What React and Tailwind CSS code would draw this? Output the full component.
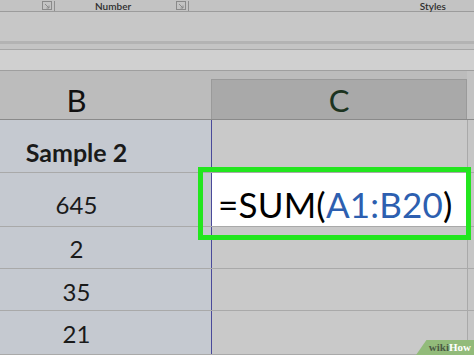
import React from "react";

const rows = [
  { b: "Sample 2", bold: true, h: "h-[53px]", pt: "pt-[20px]" },
  { b: "645", formula: true, h: "h-[54px]", pt: "pt-[20px]" },
  { b: "2", h: "h-[42px]", pt: "pt-[10px]" },
  { b: "35", h: "h-[42px]", pt: "pt-[11px]" },
  { b: "21", h: "h-[44px]", pt: "pt-[11px]" },
];

function Launcher() {
  return (
    <span className="flex items-center gap-[2px]">
      <svg width="10" height="9" viewBox="0 0 10 9" className="block">
        <rect x="0.5" y="0.5" width="9" height="8" fill="none" stroke="#8a8a8a" />
        <path d="M3 3 L7 7 M7 4.5 L7 7 L4.5 7" fill="none" stroke="#8a8a8a" />
      </svg>
      <span className="block w-px h-[10px] bg-[#8f8f8f]" />
    </span>
  );
}

export default function App() {
  return (
    <div
      className="relative w-[474px] h-[355px] overflow-hidden bg-[#c4c4c4]"
      style={{ fontFamily: "Lato, 'Open Sans', sans-serif" }}
    >
      {/* ribbon group labels */}
      <div className="flex items-center h-[12px] bg-[#c3c3c3] border-b border-[#9c9c9c] text-[10px] font-semibold text-[#2e2e2e] leading-none">
        <div className="w-[42px]" />
        <Launcher />
        <div className="w-[40px]" />
        <span>Number</span>
        <div className="w-[45px]" />
        <Launcher />
        <div className="flex-1" />
        <span className="pr-[28px]">Styles</span>
      </div>
      <div className="h-[29px] bg-[#c7c7c7]" />
      <div className="h-[3px] bg-[#b3b3b3]" />
      <div className="h-[5px] bg-[#c4c4c4] border-b border-[#a6a6a6] box-content" />
      <div className="h-[20px] bg-[#d0d0d0] border-b border-[#9f9f9f] box-content" />

      {/* column headers */}
      <div className="flex h-[49px] border-b border-[#8a8a8a] bg-[#bcbcbc]">
        <div className="w-[211px] flex items-center justify-center pt-[8px]">
          <span className="text-[31px] leading-none text-[#111] -ml-[58px] pt-[2px]">B</span>
        </div>
        <div className="w-[256px] flex flex-col">
          <div className="h-[8px]" />
          <div className="flex-1 flex items-center justify-center bg-[#a9a9a9] border-l border-r border-t border-[#9a9a9a]">
            <span className="text-[31px] leading-none text-[#1c3320] pt-[2px]">C</span>
          </div>
        </div>
        <div className="flex-1 bg-[#c2c2c2]" />
      </div>

      {/* cells */}
      {rows.map((r, i) => (
        <div key={i} className={`flex ${r.h} border-b border-[#a9a9a9]`}>
          <div className={`w-[211px] text-center bg-[#c5c9d0] ${r.pt}`}>
            <div
              className={`leading-none text-[#1a1a1a] -ml-[58px] ${r.bold ? "font-bold text-[25px]" : "text-[24px]"}`}
            >
              {r.b}
            </div>
          </div>
          <div
            className={`w-[256px] border-l border-[#4a4a9a] ${
              r.formula ? "bg-white pt-[14px]" : "bg-[#c9c9c9]"
            }`}
          >
            {r.formula && (
              <div className="text-[35px] leading-none text-black pl-[6px] tracking-[0.2px] whitespace-nowrap">
                =SUM(<span className="text-[#2d5fb0]">A1:B20</span>)
              </div>
            )}
          </div>
          <div className="flex-1 bg-[#c6c6c6] border-l border-[#a9a9a9]" />
        </div>
      ))}

      {/* selected cell highlight */}
      <div className="absolute left-[198px] top-[167px] w-[273px] h-[73px] border-[5px] border-[#22e61e]" />

      {/* watermark */}
      <div className="absolute right-0 bottom-0 w-[58px] h-[15px] bg-[#92bb7a] [clip-path:polygon(18%_0,100%_0,100%_100%,0_100%)] flex items-center justify-end pr-[3px]">
        <span
          className="text-[11px] font-bold leading-none"
          style={{ fontFamily: "'Liberation Serif', serif" }}
        >
          <span className="text-[#4b5a44]">wiki</span>
          <span className="text-white">How</span>
        </span>
      </div>
    </div>
  );
}
